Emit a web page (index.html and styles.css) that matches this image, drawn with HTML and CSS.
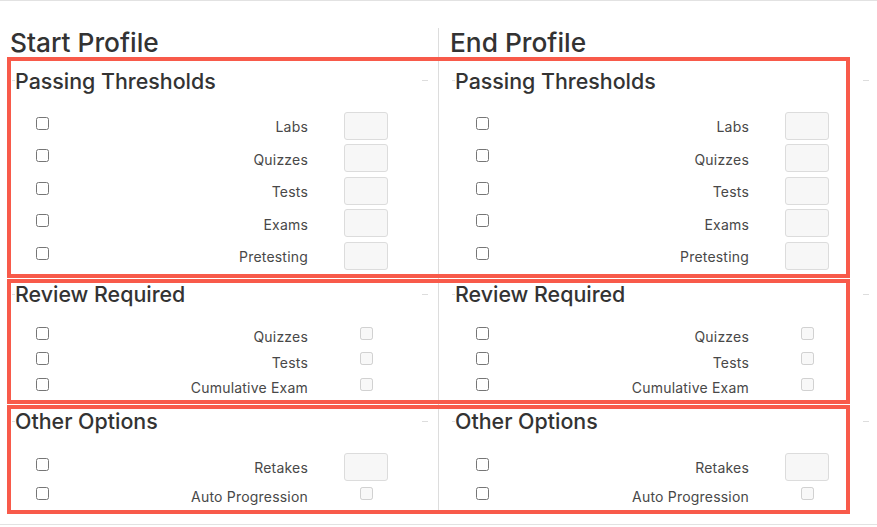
FILE: index.html
```html
<!DOCTYPE html>
<html lang="en">
<head>
<meta charset="utf-8">
<title>Profiles</title>
<link rel="stylesheet" href="styles.css">
</head>
<body>
<div class="page">
  <div class="profiles">
    <div class="row heads">
      <div class="cell"><h2 class="profile-title">Start Profile</h2></div>
      <div class="cell"><h2 class="profile-title">End Profile</h2></div>
    </div>

    <div class="row">
      <div class="cell">
        <section class="group">
          <h3 class="group-title"><span>Passing Thresholds</span></h3>
          <div class="opts">
            <div class="opt"><input type="checkbox" class="chk"><label class="lbl">Labs</label><input type="text" class="num"></div>
            <div class="opt"><input type="checkbox" class="chk"><label class="lbl">Quizzes</label><input type="text" class="num"></div>
            <div class="opt"><input type="checkbox" class="chk"><label class="lbl">Tests</label><input type="text" class="num"></div>
            <div class="opt"><input type="checkbox" class="chk"><label class="lbl">Exams</label><input type="text" class="num"></div>
            <div class="opt"><input type="checkbox" class="chk"><label class="lbl">Pretesting</label><input type="text" class="num"></div>
          </div>
        </section>
      </div>
      <div class="cell">
        <section class="group">
          <h3 class="group-title"><span>Passing Thresholds</span></h3>
          <div class="opts">
            <div class="opt"><input type="checkbox" class="chk"><label class="lbl">Labs</label><input type="text" class="num"></div>
            <div class="opt"><input type="checkbox" class="chk"><label class="lbl">Quizzes</label><input type="text" class="num"></div>
            <div class="opt"><input type="checkbox" class="chk"><label class="lbl">Tests</label><input type="text" class="num"></div>
            <div class="opt"><input type="checkbox" class="chk"><label class="lbl">Exams</label><input type="text" class="num"></div>
            <div class="opt"><input type="checkbox" class="chk"><label class="lbl">Pretesting</label><input type="text" class="num"></div>
          </div>
        </section>
      </div>
    </div>

    <div class="row">
      <div class="cell">
        <section class="group">
          <h3 class="group-title"><span>Review Required</span></h3>
          <div class="opts">
            <div class="opt short"><input type="checkbox" class="chk"><label class="lbl">Quizzes</label><input type="checkbox" class="chk sub" disabled></div>
            <div class="opt short"><input type="checkbox" class="chk"><label class="lbl">Tests</label><input type="checkbox" class="chk sub" disabled></div>
            <div class="opt short"><input type="checkbox" class="chk"><label class="lbl">Cumulative Exam</label><input type="checkbox" class="chk sub" disabled></div>
          </div>
        </section>
      </div>
      <div class="cell">
        <section class="group">
          <h3 class="group-title"><span>Review Required</span></h3>
          <div class="opts">
            <div class="opt short"><input type="checkbox" class="chk"><label class="lbl">Quizzes</label><input type="checkbox" class="chk sub" disabled></div>
            <div class="opt short"><input type="checkbox" class="chk"><label class="lbl">Tests</label><input type="checkbox" class="chk sub" disabled></div>
            <div class="opt short"><input type="checkbox" class="chk"><label class="lbl">Cumulative Exam</label><input type="checkbox" class="chk sub" disabled></div>
          </div>
        </section>
      </div>
    </div>

    <div class="row last">
      <div class="cell">
        <section class="group">
          <h3 class="group-title"><span>Other Options</span></h3>
          <div class="opts">
            <div class="opt"><input type="checkbox" class="chk"><label class="lbl">Retakes</label><input type="text" class="num"></div>
            <div class="opt short"><input type="checkbox" class="chk"><label class="lbl">Auto Progression</label><input type="checkbox" class="chk sub" disabled></div>
          </div>
        </section>
      </div>
      <div class="cell">
        <section class="group">
          <h3 class="group-title"><span>Other Options</span></h3>
          <div class="opts">
            <div class="opt"><input type="checkbox" class="chk"><label class="lbl">Retakes</label><input type="text" class="num"></div>
            <div class="opt short"><input type="checkbox" class="chk"><label class="lbl">Auto Progression</label><input type="checkbox" class="chk sub" disabled></div>
          </div>
        </section>
      </div>
    </div>
  </div>

  <div class="highlight hl-1"></div>
  <div class="highlight hl-2"></div>
  <div class="highlight hl-3"></div>
</div>
</body>
</html>
```

FILE: styles.css
```css
* { box-sizing: border-box; }

html, body {
  margin: 0;
  padding: 0;
  background: #ffffff;
}

body {
  font-family: "Inter", "Liberation Sans", sans-serif;
  color: #333333;
}

.page {
  position: relative;
  height: 525px;
  border-top: 1px solid #e2e2e2;
  border-bottom: 1px solid #e2e2e2;
  overflow: hidden;
}

.profiles {
  margin-top: 27px;
}

.row {
  display: grid;
  grid-template-columns: 438px 1fr;
}

.cell {
  padding: 0 10px 0 12px;
}

.row .cell + .cell {
  border-left: 1px solid #dddddd;
  padding: 0 8px 0 13px;
}

.heads .cell {
  padding-left: 10px;
  padding-bottom: 9.7px;
}

.heads .cell + .cell {
  padding-left: 11px;
}

.profile-title {
  margin: 0;
  font-size: 26.3px;
  line-height: 30px;
  font-weight: 500;
  color: #333333;
}

.group {
  padding-bottom: 8.75px;
}

.row.last .group {
  padding-bottom: 2px;
}

.group-title {
  display: flex;
  align-items: center;
  margin: 0;
  font-size: 21.4px;
  line-height: 26.6px;
  font-weight: 500;
  color: #333333;
}

.group-title::before,
.group-title::after {
  content: "";
  height: 1px;
  background: #dddddd;
}

.group-title::before {
  width: 3px;
}

.group-title::after {
  width: 6px;
}

.group-title span {
  flex: 1;
}

.opts {
  margin-top: 15.45px;
  padding: 0 40px 0 24px;
}

.opt {
  display: grid;
  grid-template-columns: 13px 1fr 44px;
  column-gap: 36px;
  align-items: center;
  height: 32.5px;
}

.opt.short {
  height: 25.5px;
}

.chk {
  width: 13px;
  height: 13px;
  margin: 0 0 5px 0;
}

.chk.sub {
  justify-self: center;
}

.lbl {
  text-align: right;
  font-size: 14px;
  letter-spacing: 0.2px;
  line-height: normal;
  color: #484848;
  margin-top: 2px;
  white-space: nowrap;
}

.num {
  width: 44px;
  height: 28px;
  margin: 0;
  padding: 0 4px;
  background: #f7f7f7;
  border: 1px solid #dcdcdc;
  border-radius: 3px;
  font-family: inherit;
  font-size: 14px;
}

.highlight {
  position: absolute;
  left: 7px;
  width: 843px;
  border: 4px solid #f85a4a;
  pointer-events: none;
}

.hl-1 {
  top: 56px;
  height: 221px;
}

.hl-2 {
  top: 278px;
  height: 125px;
}

.hl-3 {
  top: 404px;
  height: 109px;
}
```
